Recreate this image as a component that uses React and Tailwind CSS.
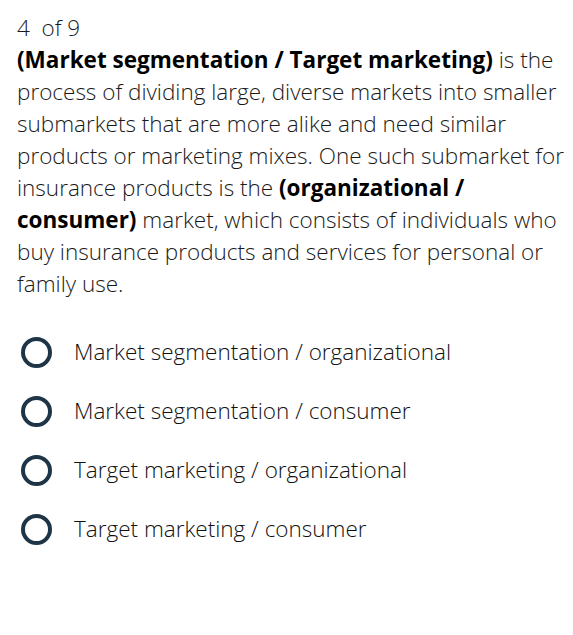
import React from 'react';

const options = [
  'Market segmentation / organizational',
  'Market segmentation / consumer',
  'Target marketing / organizational',
  'Target marketing / consumer',
];

export default function App() {
  return (
    <div className="min-h-screen bg-white pl-[17px] pr-[4px] pt-[12px] text-[#1a1a1a]" style={{ fontFamily: '"Open Sans", sans-serif' }}>
      <div className="text-[22.5px] leading-[32px] font-light">
        <div>4&nbsp; of 9</div>
        <p>
          <span className="font-bold text-black">(Market segmentation / Target marketing)</span> is the
          process of dividing large, diverse markets into smaller submarkets that are more alike and need
          similar products or marketing mixes. One such submarket for insurance products is the{' '}
          <span className="font-bold text-black">(organizational / consumer)</span> market, which consists of
          individuals who buy insurance products and services for personal or family use.
        </p>
      </div>

      <div className="mt-[36px] flex flex-col gap-[27px]">
        {options.map((opt) => (
          <label key={opt} className="flex items-center gap-[22px] pl-[4px] text-[22.5px] leading-[32px] font-light text-[#111]">
            <span className="w-[31px] h-[31px] rounded-full border-[4px] border-[#1e3447] shrink-0" />
            {opt}
          </label>
        ))}
      </div>
    </div>
  );
}
